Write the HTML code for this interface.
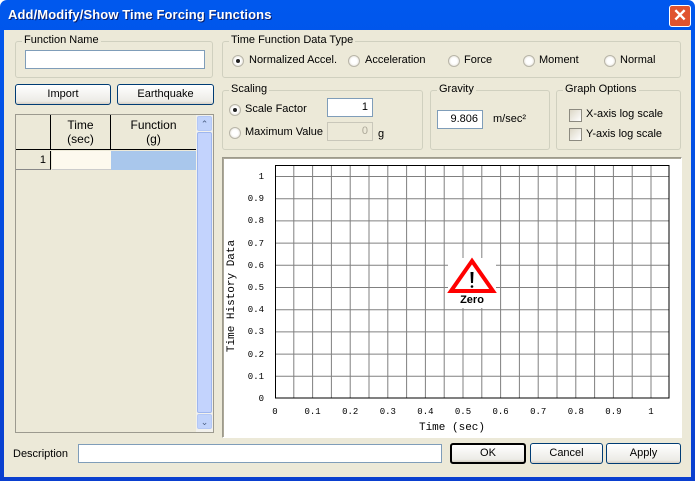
<!DOCTYPE html><html><head><style>
*{box-sizing:border-box}body{margin:0;width:695px;height:481px;overflow:hidden;font-family:"Liberation Sans",Arial,sans-serif;font-size:11px;color:#000}
.win{position:absolute;left:0;top:0;width:695px;height:481px;background:#0A246A;background:linear-gradient(#0058EE,#0A3FCF);border-radius:7px 7px 0 0}
.title{position:absolute;left:8px;top:7px;color:#fff;font-weight:bold;font-size:13px;font-family:"Liberation Sans",sans-serif;letter-spacing:.1px;text-shadow:1px 1px #0a1e6a}
.x{position:absolute;left:669px;top:5px;width:22px;height:22px;background:#E0532F;border:1px solid #fff;border-radius:3px;color:#fff;font-size:17px;text-align:center;line-height:20px;font-weight:bold}
.client{position:absolute;left:4px;top:30px;width:687px;height:447px;background:#ECE9D8}
.a{position:absolute}
.grp{position:absolute;border:1px solid #D0D0BF;border-radius:3px}
.grp>.l{position:absolute;top:-8px;left:6px;background:#ECE9D8;padding:0 2px}
.tb{position:absolute;background:#fff;border:1px solid #7F9DB9}
.btn{position:absolute;border:1px solid #003C74;border-radius:3px;background:linear-gradient(#fff,#ECEBE6 85%,#D6D0C5);text-align:center;line-height:19px}
.rad{position:absolute;width:12px;height:12px;border-radius:50%;background:radial-gradient(#fff 40%,#DCD7CB);border:1px solid #B8B5A8}
.rad.on::after{content:"";position:absolute;left:3px;top:3px;width:4px;height:4px;border-radius:50%;background:#222}
.chk{position:absolute;width:13px;height:13px;border:1px solid #8C8A80;background:linear-gradient(135deg,#DCD7C6,#fff)}
</style></head><body>
<div class="win"><div class="title">Add/Modify/Show Time Forcing Functions</div><div class="x">✕</div></div>
<div class="client">
<div style="position:absolute;left:-4px;top:-30px;width:695px;height:481px">
<div class="grp" style="left:15px;top:41px;width:198px;height:37px"><span class="l">Function Name</span></div>
<div class="tb" style="left:25px;top:50px;width:180px;height:19px"></div>
<div class="btn" style="left:15px;top:84px;width:96px;height:21px">Import</div>
<div class="btn" style="left:117px;top:84px;width:97px;height:21px">Earthquake</div>
<div class="a" style="left:15px;top:114px;width:199px;height:319px;border:1px solid #9c9a8f;background:#ECE9D8"></div>
<div class="a" style="left:16px;top:115px;width:35px;height:35px;border-right:1px solid #000;border-bottom:1px solid #000"></div>
<div class="a" style="left:51px;top:115px;width:60px;height:35px;border-right:1px solid #000;border-bottom:1px solid #000;text-align:center;line-height:14px;padding-top:3px;font-size:12px">Time<br>(sec)</div>
<div class="a" style="left:111px;top:115px;width:85px;height:35px;border-bottom:1px solid #000;text-align:center;line-height:14px;padding-top:3px;font-size:12px">Function<br>(g)</div>
<div class="a" style="left:16px;top:151px;width:35px;height:19px;border-right:1px solid #000;border-bottom:1px solid #888;text-align:right;padding-right:4px;line-height:18px">1</div>
<div class="a" style="left:52px;top:151px;width:59px;height:19px;background:#FDF9EE;border-bottom:1px solid #ccc"></div>
<div class="a" style="left:111px;top:151px;width:85px;height:19px;background:#A9C7EC"></div>
<div class="a" style="left:196px;top:115px;width:17px;height:317px;background:#F2F1EC"></div>
<div class="a" style="left:197px;top:116px;width:15px;height:15px;background:#C1D3FB;border:1px solid #B4C8F6;border-radius:2px;color:#4D6185;font-size:9px;text-align:center;line-height:14px">⌃</div>
<div class="a" style="left:197px;top:132px;width:15px;height:281px;background:#C3D3FD;border:1px solid #9EB6EE;border-radius:2px"></div>
<div class="a" style="left:197px;top:414px;width:15px;height:15px;background:#C1D3FB;border:1px solid #B4C8F6;border-radius:2px;color:#4D6185;font-size:9px;text-align:center;line-height:14px">⌄</div>

<div class="grp" style="left:222px;top:41px;width:459px;height:37px"><span class="l">Time Function Data Type</span></div>
<div class="rad on" style="left:232px;top:55px"></div><div class="a" style="left:249px;top:54px">Normalized Accel.</div>
<div class="rad" style="left:348px;top:55px"></div><div class="a" style="left:365px;top:54px">Acceleration</div>
<div class="rad" style="left:448px;top:55px"></div><div class="a" style="left:464px;top:54px">Force</div>
<div class="rad" style="left:523px;top:55px"></div><div class="a" style="left:539px;top:54px">Moment</div>
<div class="rad" style="left:604px;top:55px"></div><div class="a" style="left:620px;top:54px">Normal</div>

<div class="grp" style="left:222px;top:90px;width:201px;height:60px"><span class="l">Scaling</span></div>
<div class="rad on" style="left:229px;top:104px"></div><div class="a" style="left:245px;top:103px">Scale Factor</div>
<div class="tb" style="left:327px;top:98px;width:46px;height:19px;text-align:right;padding-right:4px;line-height:17px">1</div>
<div class="rad" style="left:229px;top:127px"></div><div class="a" style="left:245px;top:126px">Maximum Value</div>
<div class="tb" style="left:327px;top:122px;width:46px;height:19px;background:#ECE9D8;border-color:#C9C7BA;color:#aca899;text-align:right;padding-right:4px;line-height:17px">0</div>
<div class="a" style="left:378px;top:128px">g</div>

<div class="grp" style="left:430px;top:90px;width:120px;height:60px"><span class="l">Gravity</span></div>
<div class="tb" style="left:437px;top:110px;width:46px;height:19px;text-align:right;padding-right:4px;line-height:17px">9.806</div>
<div class="a" style="left:493px;top:113px">m/sec²</div>

<div class="grp" style="left:556px;top:90px;width:125px;height:60px"><span class="l">Graph Options</span></div>
<div class="chk" style="left:569px;top:109px"></div><div class="a" style="left:586px;top:108px">X-axis log scale</div>
<div class="chk" style="left:569px;top:128px"></div><div class="a" style="left:586px;top:128px">Y-axis log scale</div>

<div class="a" style="left:222px;top:157px;width:460px;height:281px;background:#fff;border:1px solid #9d9a8c;border-right-color:#fff;border-bottom-color:#fff;box-shadow:inset 1px 1px #ACA899"></div>
<svg class="a" style="left:0;top:0" width="695" height="481" font-family="Liberation Mono,monospace" font-size="9">
<g stroke="#808080" stroke-width="1">
<line x1="293.8" y1="165" x2="293.8" y2="398"/><line x1="312.6" y1="165" x2="312.6" y2="398"/><line x1="331.4" y1="165" x2="331.4" y2="398"/><line x1="350.2" y1="165" x2="350.2" y2="398"/><line x1="369" y1="165" x2="369" y2="398"/><line x1="387.8" y1="165" x2="387.8" y2="398"/><line x1="406.6" y1="165" x2="406.6" y2="398"/><line x1="425.4" y1="165" x2="425.4" y2="398"/><line x1="444.2" y1="165" x2="444.2" y2="398"/><line x1="463" y1="165" x2="463" y2="398"/><line x1="481.8" y1="165" x2="481.8" y2="398"/><line x1="500.6" y1="165" x2="500.6" y2="398"/><line x1="519.4" y1="165" x2="519.4" y2="398"/><line x1="538.2" y1="165" x2="538.2" y2="398"/><line x1="557" y1="165" x2="557" y2="398"/><line x1="575.8" y1="165" x2="575.8" y2="398"/><line x1="594.6" y1="165" x2="594.6" y2="398"/><line x1="613.4" y1="165" x2="613.4" y2="398"/><line x1="632.2" y1="165" x2="632.2" y2="398"/><line x1="651" y1="165" x2="651" y2="398"/>
<line x1="275" y1="176.5" x2="669" y2="176.5"/><line x1="275" y1="198.7" x2="669" y2="198.7"/><line x1="275" y1="220.9" x2="669" y2="220.9"/><line x1="275" y1="243.1" x2="669" y2="243.1"/><line x1="275" y1="265.3" x2="669" y2="265.3"/><line x1="275" y1="287.5" x2="669" y2="287.5"/><line x1="275" y1="309.7" x2="669" y2="309.7"/><line x1="275" y1="331.9" x2="669" y2="331.9"/><line x1="275" y1="354.1" x2="669" y2="354.1"/><line x1="275" y1="376.3" x2="669" y2="376.3"/>
</g>
<rect x="275.5" y="165.5" width="393.5" height="232.5" fill="none" stroke="#000"/>
<g text-anchor="end">
<text x="264" y="179">1</text><text x="264" y="201">0.9</text><text x="264" y="223">0.8</text><text x="264" y="246">0.7</text><text x="264" y="268">0.6</text><text x="264" y="290">0.5</text><text x="264" y="312">0.4</text><text x="264" y="334">0.3</text><text x="264" y="357">0.2</text><text x="264" y="379">0.1</text><text x="264" y="401">0</text></g>
<g text-anchor="middle">
<text x="275" y="414">0</text><text x="312.6" y="414">0.1</text><text x="350.2" y="414">0.2</text><text x="387.8" y="414">0.3</text><text x="425.4" y="414">0.4</text><text x="463" y="414">0.5</text><text x="500.6" y="414">0.6</text><text x="538.2" y="414">0.7</text><text x="575.8" y="414">0.8</text><text x="613.4" y="414">0.9</text><text x="651" y="414">1</text></g>
<text x="452" y="430" text-anchor="middle" font-size="11">Time (sec)</text>
<text transform="translate(234,296) rotate(-90)" text-anchor="middle" font-size="11">Time History Data</text>
<rect x="448" y="258" width="48" height="50" fill="#fff"/>
<polygon points="472,261 451,291 493,291" fill="#fff" stroke="#f00" stroke-width="4" stroke-linejoin="miter"/>
<path d="M470.5,272 h3 l-0.5,11 h-2z" fill="#000"/><circle cx="472" cy="286.5" r="1.3" fill="#000"/>
<text x="472" y="303" text-anchor="middle" font-family="Liberation Sans,sans-serif" font-weight="bold" font-size="11">Zero</text>
</svg>

<div class="a" style="left:13px;top:448px">Description</div>
<div class="tb" style="left:78px;top:444px;width:364px;height:19px"></div>
<div class="btn" style="left:450px;top:443px;width:76px;height:21px;border:2px solid #000;line-height:17px">OK</div>
<div class="btn" style="left:530px;top:443px;width:73px;height:21px">Cancel</div>
<div class="btn" style="left:606px;top:443px;width:75px;height:21px">Apply</div>
</div></div>
</body></html>
